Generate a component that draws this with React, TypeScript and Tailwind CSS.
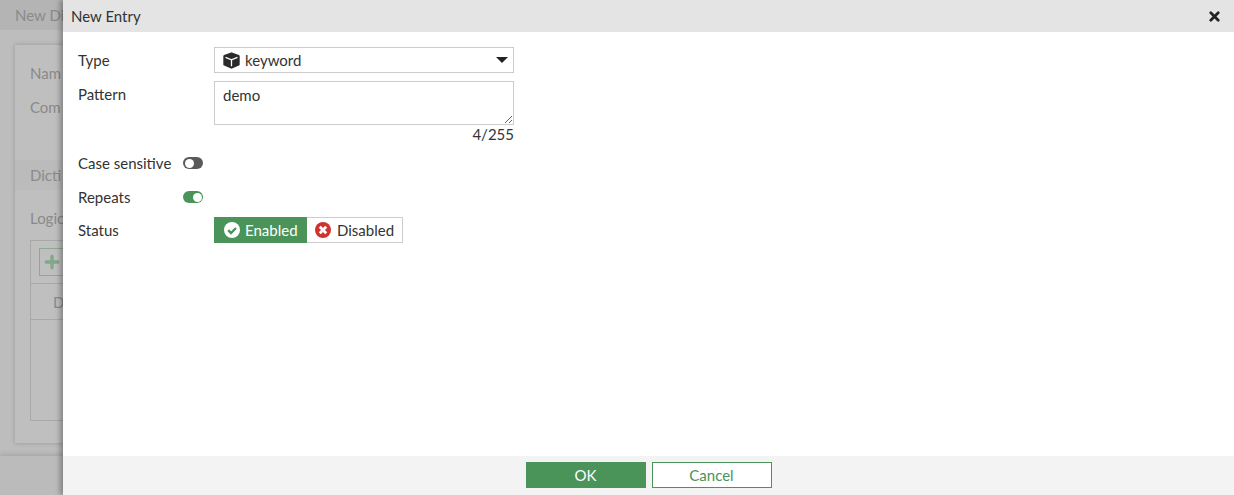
import { X, Plus } from 'lucide-react'

function BoxIcon() {
  return (
    <svg viewBox="0 0 16 16" className="w-[17px] h-[17px] -ml-[1px]">
      <path d="M8 1.4 14.6 3.8V11.8L8 14.6 1.4 11.8V3.8Z" fill="#2b2b2b" stroke="#2b2b2b" strokeWidth="2.2" strokeLinejoin="round" />
      <path d="M2.4 5 8 7.4 13.6 5M8 7.4V13.4" fill="none" stroke="#fff" strokeWidth="1.2" />
    </svg>
  )
}

function CheckCircle() {
  return (
    <svg viewBox="0 0 16 16" className="w-[16px] h-[16px]">
      <circle cx="8" cy="8" r="8" fill="#fff" />
      <path d="M4.2 8.2 7 11 12 6" fill="none" stroke="#4a9359" strokeWidth="2.4" />
    </svg>
  )
}

function CrossCircle() {
  return (
    <svg viewBox="0 0 16 16" className="w-[16px] h-[16px]">
      <circle cx="8" cy="8" r="8" fill="#d0322d" />
      <path d="M4.8 4.8 11.2 11.2M11.2 4.8 4.8 11.2" fill="none" stroke="#fff" strokeWidth="2.8" />
    </svg>
  )
}

function Toggle({ on }: { on: boolean }) {
  return (
    <div className={`w-[20px] h-[12px] rounded-full flex items-center px-[1.5px] ${on ? 'bg-[#4a9359] justify-end' : 'bg-[#5a5a5a] justify-start'}`}>
      <div className="w-[9px] h-[9px] rounded-full bg-white" />
    </div>
  )
}

function Background() {
  return (
    <div className="h-full flex flex-col bg-[#bdbdbd] text-[#8a8a8a]">
      <div className="h-[30px] bg-[#b4b4b4] pl-[15px] leading-[30px] shrink-0">New Di</div>
      <div className="flex-1 pt-[15px] pl-[15px] pr-[15px] pb-[13px] min-h-0">
        <div className="h-full bg-[#bfbfbf] shadow-[0_0_5px_rgba(0,0,0,0.2)] pt-[11px]">
          <div className="pl-[15px] h-[34px] leading-[34px]">Nam</div>
          <div className="pl-[15px] h-[34px] leading-[34px]">Com</div>
          <div className="mt-[36px] h-[30px] bg-[#bbbbbb] pl-[15px] leading-[30px]">Dicti</div>
          <div className="pl-[15px] mt-[16px] h-[24px] leading-[24px]">Logic</div>
          <div className="ml-[15px] mt-[10px] h-[181px] border border-[#a8a8a8]">
            <div className="h-[43px] border-b border-[#a8a8a8] pl-[8px] pt-[7px]">
              <div className="w-[40px] h-[28px] border border-[#8fa892] flex items-center pl-[2px]">
                <Plus className="w-[20px] h-[20px] text-[#82a78a]" strokeWidth={4} />
              </div>
            </div>
            <div className="h-[36px] border-b border-[#a8a8a8] pl-[22px] leading-[36px]">D</div>
          </div>
        </div>
      </div>
      <div className="h-[39px] bg-[#bbb] shadow-[0_-2px_5px_rgba(0,0,0,0.12)] shrink-0" />
    </div>
  )
}

export default function App() {
  return (
    <div className="relative w-[1234px] h-[495px] overflow-hidden text-[15px] font-['Lato',sans-serif]">
      <Background />
      <div className="absolute top-0 bottom-0 left-[63px] right-0 bg-white flex flex-col text-[#333] shadow-[-3px_0_5px_rgba(0,0,0,0.3)]">
        <div className="h-[32px] shrink-0 bg-[#e4e4e4] flex items-center justify-between pl-[8px] pr-[12px]">
          <span>New Entry</span>
          <X className="w-[15px] h-[15px] text-[#222]" strokeWidth={4.5} />
        </div>

        <div className="flex-1 pl-[15px] pt-[15px]">
          <div className="flex items-center h-[26px]">
            <label className="w-[136px]">Type</label>
            <div className="w-[300px] h-[26px] border border-[#ccc] flex items-center pl-[9px] pr-[5px] gap-[5px]">
              <BoxIcon />
              <span className="flex-1">keyword</span>
              <div className="w-0 h-0 border-l-[6px] border-r-[6px] border-t-[6px] border-l-transparent border-r-transparent border-t-[#222]" />
            </div>
          </div>

          <div className="flex mt-[8px]">
            <label className="w-[136px] leading-[26px]">Pattern</label>
            <div className="w-[300px]">
              <textarea
                readOnly
                value="demo"
                className="block w-[300px] h-[44px] border border-[#ccc] px-[8px] py-[3px] outline-none resize-y leading-[20px]"
              />
              <div className="text-right leading-[19px]">4/255</div>
            </div>
          </div>

          <div className="flex items-center h-[20px] mt-[9px]">
            <label className="w-[105px]">Case sensitive</label>
            <Toggle on={false} />
          </div>

          <div className="flex items-center h-[20px] mt-[14px]">
            <label className="w-[105px]">Repeats</label>
            <Toggle on={true} />
          </div>

          <div className="flex items-center h-[26px] mt-[10px]">
            <label className="w-[136px]">Status</label>
            <div className="flex h-[26px]">
              <div className="w-[93px] bg-[#4a9359] text-white flex items-center pl-[10px] gap-[5px]">
                <CheckCircle />
                <span>Enabled</span>
              </div>
              <div className="w-[96px] border border-l-0 border-[#ccc] flex items-center pl-[8px] gap-[6px]">
                <CrossCircle />
                <span>Disabled</span>
              </div>
            </div>
          </div>
        </div>

        <div className="h-[39px] shrink-0 bg-[#f3f3f3] flex items-start justify-center gap-[6px] pt-[6px]">
          <button className="w-[120px] h-[26px] bg-[#4a9359] text-white">OK</button>
          <button className="w-[120px] h-[26px] bg-white border border-[#4a9359] text-[#4a9359]">Cancel</button>
        </div>
      </div>
    </div>
  )
}
